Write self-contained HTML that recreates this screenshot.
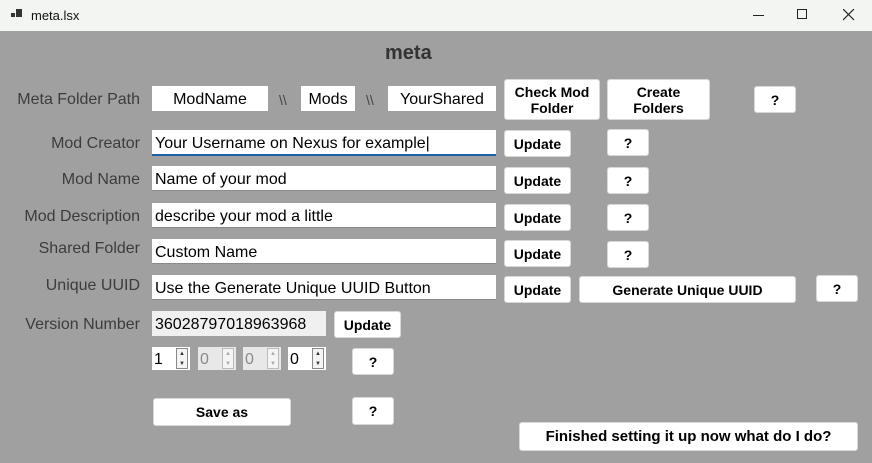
<!DOCTYPE html>
<html><head><style>
*{margin:0;padding:0;box-sizing:border-box}
body{width:872px;height:463px;overflow:hidden;background:#a0a0a0;font-family:"Liberation Sans",Arial,sans-serif;position:relative}
.a{position:absolute}
.tb{left:0;top:0;width:872px;height:31px;background:#f3f5f2}
.lbl{font-size:16px;color:#3c3c3c;text-align:right;width:140px;left:0}
.in{background:#fff;font-size:16px;color:#000;padding:4px 3px 0;line-height:20px;white-space:nowrap;border-bottom:1px solid #8a8a8a}
.btn{background:#fff;border-radius:3px;font-weight:bold;font-size:14px;color:#000;display:flex;align-items:center;justify-content:center;text-align:center;line-height:16px;border:1px solid #d8d8d8}
.sp{background:#fff;height:23px;font-size:16px;line-height:25px;padding-left:2px}
.sp.d{background:#e8e8e8;color:#8a8a8a}
.ar{position:absolute;right:2px;top:1px;width:12px;height:21px;border:1px solid #888;background:#f4f4f4;font-size:6px;line-height:10px;text-align:center;color:#333}
</style></head><body>
<div class="a tb">
<svg class="a" style="left:11px;top:9px" width="12" height="12"><rect x="0" y="4" width="4" height="4" fill="#333"/><rect x="5" y="0" width="6" height="8" fill="#333"/></svg>
<div class="a" style="left:31px;top:8px;font-size:13px;color:#111">meta.lsx</div>
<div class="a" style="left:753px;top:15px;width:11px;height:1px;background:#222"></div>
<div class="a" style="left:797px;top:9px;width:10px;height:10px;border:1px solid #222"></div>
<svg class="a" style="left:843px;top:9px" width="12" height="12"><path d="M0 0L11 11M11 0L0 11" stroke="#222" stroke-width="1.2"/></svg>
</div>
<div class="a" style="left:385px;top:42px;font-size:20px;font-weight:bold;color:#333">meta</div>

<div class="a lbl" style="top:91px">Meta Folder Path</div>
<div class="a in" style="left:152px;top:86px;width:116px;height:25px;text-align:center;border:0">ModName</div>
<div class="a" style="left:279px;top:92px;font-size:14px;color:#444">\\</div>
<div class="a in" style="left:301px;top:86px;width:54px;height:25px;text-align:center;border:0">Mods</div>
<div class="a" style="left:366px;top:92px;font-size:14px;color:#444">\\</div>
<div class="a in" style="left:388px;top:86px;width:108px;height:25px;text-align:center;border:0">YourShared</div>
<div class="a btn" style="left:504px;top:79px;width:96px;height:41px">Check Mod<br>Folder</div>
<div class="a btn" style="left:607px;top:79px;width:103px;height:41px">Create<br>Folders</div>
<div class="a btn" style="left:754px;top:86px;width:42px;height:27px">?</div>

<div class="a lbl" style="top:135px">Mod Creator</div>
<div class="a in" style="left:152px;top:130px;width:344px;height:26px;border-bottom:2px solid #1a5fa8">Your Username on Nexus for example|</div>
<div class="a btn" style="left:504px;top:130px;width:67px;height:27px">Update</div>
<div class="a btn" style="left:607px;top:129px;width:42px;height:27px">?</div>

<div class="a lbl" style="top:171px">Mod Name</div>
<div class="a in" style="left:152px;top:166px;width:344px;height:25px">Name of your mod</div>
<div class="a btn" style="left:504px;top:167px;width:67px;height:27px">Update</div>
<div class="a btn" style="left:607px;top:167px;width:42px;height:27px">?</div>

<div class="a lbl" style="top:208px">Mod Description</div>
<div class="a in" style="left:152px;top:203px;width:344px;height:25px">describe your mod a little</div>
<div class="a btn" style="left:504px;top:204px;width:67px;height:27px">Update</div>
<div class="a btn" style="left:607px;top:204px;width:42px;height:27px">?</div>

<div class="a lbl" style="top:240px">Shared Folder</div>
<div class="a in" style="left:152px;top:239px;width:344px;height:25px">Custom Name</div>
<div class="a btn" style="left:504px;top:240px;width:67px;height:27px">Update</div>
<div class="a btn" style="left:607px;top:241px;width:42px;height:27px">?</div>

<div class="a lbl" style="top:277px">Unique UUID</div>
<div class="a in" style="left:152px;top:275px;width:344px;height:25px">Use the Generate Unique UUID Button</div>
<div class="a btn" style="left:504px;top:276px;width:67px;height:27px">Update</div>
<div class="a btn" style="left:579px;top:276px;width:217px;height:27px">Generate Unique UUID</div>
<div class="a btn" style="left:816px;top:275px;width:42px;height:27px">?</div>

<div class="a lbl" style="top:316px">Version Number</div>
<div class="a in" style="left:152px;top:311px;width:174px;height:25px;background:#f0f0f0;border:0">36028797018963968</div>
<div class="a btn" style="left:334px;top:311px;width:67px;height:27px">Update</div>

<div class="a sp" style="left:152px;top:347px;width:38px">1<div class="ar">▲<br>▼</div></div>
<div class="a sp d" style="left:198px;top:347px;width:38px">0<div class="ar" style="border-color:#bbb;color:#aaa">▲<br>▼</div></div>
<div class="a sp d" style="left:243px;top:347px;width:38px">0<div class="ar" style="border-color:#bbb;color:#aaa">▲<br>▼</div></div>
<div class="a sp" style="left:288px;top:347px;width:38px">0<div class="ar">▲<br>▼</div></div>
<div class="a btn" style="left:352px;top:348px;width:42px;height:27px">?</div>

<div class="a btn" style="left:153px;top:398px;width:138px;height:28px">Save as</div>
<div class="a btn" style="left:352px;top:397px;width:42px;height:28px">?</div>
<div class="a btn" style="left:519px;top:422px;width:339px;height:29px;font-size:15px">Finished setting it up now what do I do?</div>
</body></html>
